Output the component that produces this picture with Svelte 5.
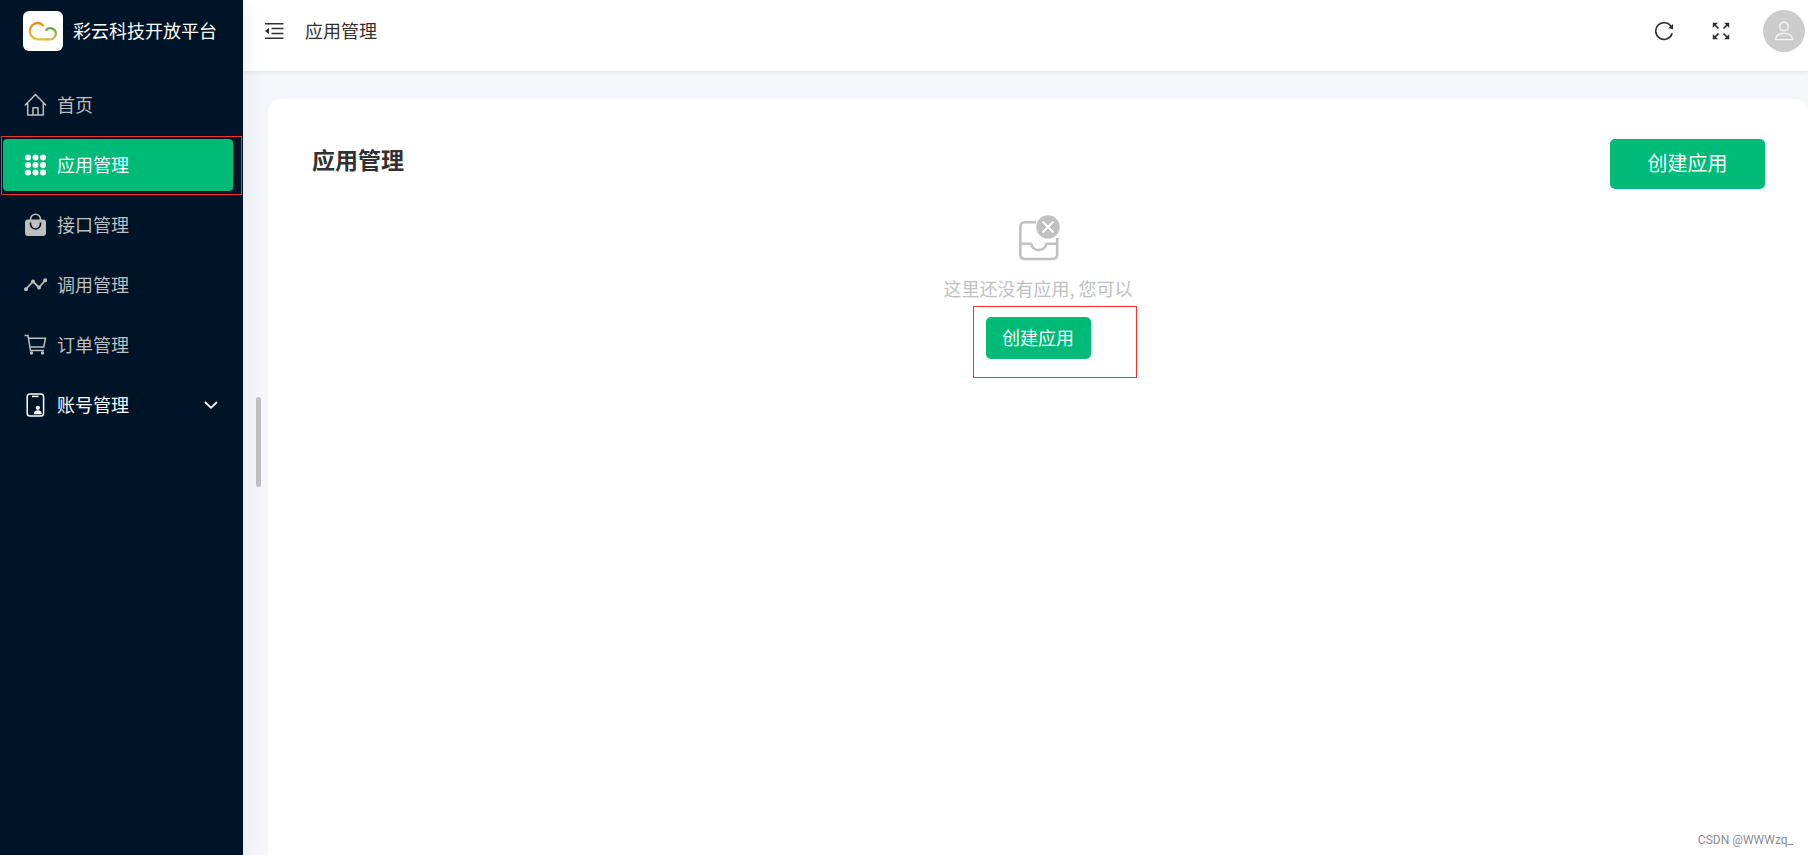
<script>
  const items = [
    { icon: 'home', label: '首页' },
    { icon: 'grid', label: '应用管理' },
    { icon: 'bag', label: '接口管理' },
    { icon: 'trend', label: '调用管理' },
    { icon: 'cart', label: '订单管理' },
    { icon: 'account', label: '账号管理', group: true }
  ];
  let current = $state('应用管理');
  const dots = [4, 11.5, 19];
</script>

<div class="app">
  <aside class="sidebar">
    <div class="brand">
      <span class="logo">
        <svg width="40" height="40" viewBox="0 0 40 40" fill="none" stroke-width="2.3" stroke-linecap="round">
          <defs>
            <linearGradient id="warm" x1="0" y1="0" x2="0" y2="1">
              <stop offset="0" stop-color="#ee8c10" />
              <stop offset="1" stop-color="#e2be3c" />
            </linearGradient>
            <linearGradient id="fresh" x1="0" y1="1" x2="0" y2="0">
              <stop offset="0" stop-color="#dcbc3c" />
              <stop offset=".45" stop-color="#a2b83e" />
              <stop offset="1" stop-color="#5bab3c" />
            </linearGradient>
          </defs>
          <path d="M20 14.4C18.5 12.7 16.6 12 14.6 12A8.1 8.1 0 0 0 6.8 20.2A8.1 8.1 0 0 0 14.6 28.3H24" stroke="url(#warm)" />
          <path d="M23.5 28.3H27.3A5.5 5.5 0 0 0 32.8 22.8A5.5 5.5 0 0 0 23.3 18.9" stroke="url(#fresh)" />
        </svg>
      </span>
      <span class="label">彩云科技开放平台</span>
    </div>
    <nav>
      {#each items as item}
        <div class="slot">
          <button class="item" class:active={current === item.label} class:group={item.group} onclick={() => (current = item.label)}>
            <svg width="23" height="24" viewBox="0 0 23 24" fill="none" stroke="currentColor" stroke-width="1.5">
              {#if item.icon === 'home'}
                <path d="M.8 12.6L11.5 1.5L22.2 12.6M3.7 10.2V22H19.3V10.2M9 22V14.8H14V22" stroke-linejoin="round" />
              {:else if item.icon === 'grid'}
                {#each dots as x}
                  {#each dots as y}
                    <circle cx={x} cy={y + 0.5} r="3" fill="currentColor" stroke="none" />
                  {/each}
                {/each}
              {:else if item.icon === 'bag'}
                <path d="M4 6.5H19Q22 6.5 22 9.5V20Q22 23 19 23H4Q1 23 1 20V9.5Q1 6.5 4 6.5Z" fill="currentColor" stroke="none" />
                <path d="M6.5 8V6.3A5 5 0 0 1 16.5 6.3V8" stroke-width="1.6" />
                <path class="cut" d="M6.5 9.5V11A5 5 0 0 0 16.5 11V9.5" stroke-width="1.6" />
              {:else if item.icon === 'trend'}
                <path d="M2 16L9 8.5L15 14.5L21.5 7" stroke-width="1.8" />
                <g fill="currentColor" stroke="none">
                  <circle cx="2" cy="16.3" r="2" /><circle cx="9" cy="8.5" r="2" />
                  <circle cx="15" cy="14.5" r="2" /><circle cx="21.3" cy="7.2" r="2" />
                </g>
              {:else if item.icon === 'cart'}
                <path d="M.5 2.6H4L6.5 17.5H20M4.5 5.3H21.5L19.7 14H6" />
                <g fill="currentColor" stroke="none">
                  <circle cx="7.5" cy="20" r="1.7" /><circle cx="18.5" cy="20" r="1.7" />
                </g>
              {:else}
                <rect x="3.2" y=".9" width="16.4" height="22.2" rx="2.8" />
                <path d="M8 3.4H14.5" />
                <g fill="currentColor" stroke="none">
                  <circle cx="13.8" cy="14.8" r="2.1" /><path d="M9.8 21.3Q10 17.3 13.8 17.3T17.8 21.3Z" />
                </g>
              {/if}
            </svg>
            <span class="label">{item.label}</span>
            {#if item.group}
              <svg class="chevron" width="14" height="14" viewBox="0 0 14 14" fill="none" stroke="currentColor" stroke-width="1.8">
                <path d="M1 4L7 9.8L13 4" />
              </svg>
            {/if}
          </button>
          {#if item.icon === 'grid'}<i class="outline"></i>{/if}
        </div>
      {/each}
    </nav>
    <i class="thumb"></i>
  </aside>

  <div class="body">
    <header>
      <button class="tool" aria-label="收起菜单">
        <svg width="20" height="20" viewBox="0 0 20 20" fill="none" stroke="currentColor" stroke-width="1.5">
          <path d="M1 2.8H19.5M7.5 7.5H19.5M7.5 12.5H19.5M1 17.3H19.5" />
          <path d="M1 10L5 6.8V13.2Z" fill="currentColor" stroke="none" />
        </svg>
      </button>
      <span class="crumb label">应用管理</span>
      <button class="tool refresh" aria-label="刷新">
        <svg width="20" height="20" viewBox="0 0 20 20" fill="none" stroke="currentColor" stroke-width="1.6">
          <path d="M17.5 6A8.4 8.4 0 1 0 18.2 12.3" />
          <path d="M19 3V8.2L14.2 7.2Z" fill="currentColor" stroke="none" />
        </svg>
      </button>
      <button class="tool full" aria-label="全屏">
        <svg width="18" height="18" viewBox="0 0 18 18" fill="currentColor" stroke="currentColor" stroke-width="1.7">
          <path d="M2 2L6.5 6.5M16 2L11.5 6.5M2 16L6.5 11.5M16 16L11.5 11.5" />
          <path d="M.8 .8H6L.8 6ZM17.2 .8H12L17.2 6ZM.8 17.2H6L.8 12ZM17.2 17.2H12L17.2 12Z" stroke="none" />
        </svg>
      </button>
      <button class="avatar" aria-label="账号">
        <svg width="20" height="20" viewBox="0 0 20 20" fill="none" stroke="currentColor" stroke-width="1.4">
          <circle cx="10" cy="5.5" r="4.3" />
          <path d="M2 18.6Q1.2 18.6 1.5 17.5C2.5 14 5.8 12.4 10 12.4S17.5 14 18.5 17.5Q18.8 18.6 18 18.6Z" />
        </svg>
      </button>
    </header>

    <main>
      <section class="card">
        <div class="head">
          <h1>应用管理</h1>
          <button class="primary large">创建应用</button>
        </div>
        <div class="empty">
          <svg width="44" height="48" viewBox="0 0 44 48" fill="none" stroke="currentColor" stroke-width="2.6">
            <path d="M20 7.3H9Q4.3 7.3 4.3 12V39.3Q4.3 44 9 44H36.5Q41.2 44 41.2 39.3V23" />
            <path d="M4.3 28.8H15Q16.5 35 22.8 35T30.5 28.8H41" />
            <circle cx="32" cy="12" r="11.7" fill="currentColor" stroke="none" />
            <path d="M26.5 6.5L37.5 17.5M37.5 6.5L26.5 17.5" stroke="#fff" stroke-width="2" />
          </svg>
          <p>这里还没有应用, 您可以</p>
          <div class="action">
            <button class="primary">创建应用</button>
            <i class="outline"></i>
          </div>
        </div>
        <small>CSDN @WWWzq_</small>
      </section>
    </main>
  </div>
</div>

<style>
  :global(body) {
    margin: 0;
    font-family: "Noto Sans CJK SC", sans-serif;
    font-size: 18px;
    color: #303133;
  }
  .app {
    display: flex;
    min-height: 100vh;
  }
  svg {
    display: block;
    flex: none;
  }
  button {
    font: inherit;
    border: 0;
    padding: 0;
    cursor: pointer;
  }
  .sidebar {
    position: relative;
    z-index: 1;
    flex: 0 0 243px;
    background: #001427;
    color: #fff;
    box-shadow: 2px 0 16px rgba(29, 35, 41, 0.08);
  }
  .brand {
    display: flex;
    align-items: center;
    gap: 10px;
    height: 62px;
    padding-left: 23px;
    white-space: nowrap;
  }
  .logo {
    background: #fff;
    border-radius: 6px;
  }
  .label {
    padding-bottom: 3px;
  }
  nav {
    padding-top: 13px;
  }
  .slot {
    position: relative;
    padding: 4px 10px 4px 3px;
  }
  .item {
    display: flex;
    align-items: center;
    gap: 10px;
    width: 100%;
    height: 52px;
    padding: 0 15px 0 21px;
    border-radius: 4px;
    background: transparent;
    color: #bfbfbf;
  }
  .item.group {
    color: #fff;
  }
  .item.active {
    background: #00ba78;
    color: #fff;
  }
  .cut {
    stroke: #001427;
  }
  .chevron {
    margin-left: auto;
  }
  .outline {
    position: absolute;
    border: 1px solid #f73131;
    pointer-events: none;
  }
  .slot .outline {
    inset: 1px 1px 0;
  }
  .thumb {
    position: absolute;
    left: 256px;
    top: calc(50vh - 31px);
    width: 5px;
    height: 90px;
    border-radius: 3px;
    background: #bfbfbf;
  }
  .body {
    flex: 1;
    min-width: 0;
    display: flex;
    flex-direction: column;
    background: #f5f6f9;
  }
  header {
    position: relative;
    display: flex;
    align-items: center;
    height: 62px;
    padding: 0 3px 9px 21px;
    background: #fff;
    box-shadow: 0 1px 5px rgba(0, 21, 41, 0.09);
  }
  .tool {
    background: transparent;
    color: #303133;
  }
  .crumb {
    margin-left: 21px;
  }
  .refresh {
    margin-left: auto;
  }
  .full {
    margin: 0 33px 0 38px;
  }
  .avatar {
    display: grid;
    place-items: center;
    width: 42px;
    height: 42px;
    border-radius: 50%;
    background: #ccc;
    color: #f4f4f4;
  }
  main {
    flex: 1;
    display: flex;
    padding: 28px 0 0 25px;
  }
  .card {
    flex: 1;
    display: flex;
    flex-direction: column;
    padding: 40px 0 4px;
    border-radius: 13px 13px 0 0;
    background: #fff;
  }
  .head {
    display: flex;
    justify-content: space-between;
    padding: 0 43px 0 44px;
  }
  h1 {
    margin: 0;
    font-size: 23px;
    line-height: 40px;
  }
  .primary {
    width: 105px;
    height: 42px;
    padding-bottom: 3px;
    border-radius: 5px;
    background: #00ba78;
    color: #fff;
  }
  .primary.large {
    width: 155px;
    height: 50px;
    font-size: 20px;
  }
  .empty {
    display: flex;
    flex-direction: column;
    align-items: center;
    padding-top: 26px;
    color: #c0c0c0;
  }
  p {
    margin: 10px 0 14px;
    line-height: 30px;
  }
  .action {
    position: relative;
  }
  .action .outline {
    inset: -11px -46px -19px -13px;
  }
  small {
    margin: auto 15px 0 auto;
    font: 12px/22px Roboto, Arial, sans-serif;
    color: #8c8c8c;
  }
</style>
